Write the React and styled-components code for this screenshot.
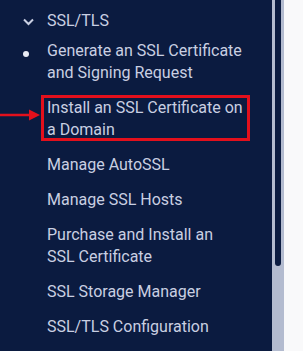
import React from "react";
import styled, { createGlobalStyle } from "styled-components";

const GlobalStyle = createGlobalStyle`
  html, body {
    margin: 0;
    padding: 0;
    background: #f9f9fa;
  }
`;

const Page = styled.div`
  display: flex;
  height: 351px;
  overflow: hidden;
  font-family: Roboto, "Liberation Sans", sans-serif;
`;

const Sidebar = styled.nav`
  width: 272px;
  background: #0b1b40;
  position: relative;
  padding-top: 10px;
  box-sizing: border-box;
`;

const Track = styled.div`
  width: 12px;
  background: #b3bbcf;
  display: flex;
  justify-content: center;
`;

const Thumb = styled.div`
  width: 6px;
  height: 266px;
  background: #0b1b40;
  border-radius: 0 0 3px 3px;
`;

const Content = styled.div`
  flex: 1;
  background: #f9f9fa;
`;

const Section = styled.div`
  display: flex;
  align-items: center;
  color: #c9cfe2;
  font-size: 16px;
  line-height: 22px;
  padding-left: 22px;
  gap: 12px;
`;

const List = styled.ul`
  list-style: none;
  margin: 0;
  padding: 2px 0 0 0;
`;

const Item = styled.li`
  position: relative;
  padding: 6px 20px 7px 47px;
  color: #c9cfe2;
  font-size: 16px;
  line-height: 22px;
  white-space: nowrap;

  ${(p) =>
    p.$active &&
    `
    &::before {
      content: "";
      position: absolute;
      left: 23px;
      top: 17px;
      width: 6px;
      height: 6px;
      border-radius: 50%;
      background: #e9ecf5;
    }
  `}
`;

const Line = styled.span`
  display: block;
`;

const Highlight = styled.span`
  position: absolute;
  left: 41px;
  top: 4px;
  width: 209px;
  height: 46px;
  border: 3px solid #e3101c;
  box-sizing: border-box;
  pointer-events: none;
`;

const Arrow = styled.svg`
  position: absolute;
  left: 0;
  top: 18px;
`;

const Chevron = () => (
  <svg width="13" height="13" viewBox="0 0 13 13">
    <path d="M2 4.5 L6.5 9 L11 4.5" fill="none" stroke="#c9cfe2" strokeWidth="2" />
  </svg>
);

const items = [
  { lines: ["Generate an SSL Certificate", "and Signing Request"], active: true },
  { lines: ["Install an SSL Certificate on", "a Domain"], marked: true },
  { lines: ["Manage AutoSSL"] },
  { lines: ["Manage SSL Hosts"] },
  { lines: ["Purchase and Install an", "SSL Certificate"] },
  { lines: ["SSL Storage Manager"] },
  { lines: ["SSL/TLS Configuration"] },
];

export default function App() {
  return (
    <>
      <GlobalStyle />
      <Page>
        <Sidebar>
          <Section>
            <Chevron />
            SSL/TLS
          </Section>
          <List>
            {items.map((it) => (
              <Item key={it.lines[0]} $active={it.active}>
                {it.lines.map((l) => (
                  <Line key={l}>{l}</Line>
                ))}
                {it.marked && (
                  <>
                    <Highlight />
                    <Arrow width="41" height="12" viewBox="0 0 41 12">
                      <line x1="0" y1="6" x2="32" y2="6" stroke="#e3101c" strokeWidth="2.5" />
                      <polygon points="29,0.5 40,6 29,11.5" fill="#e3101c" />
                    </Arrow>
                  </>
                )}
              </Item>
            ))}
          </List>
        </Sidebar>
        <Track>
          <Thumb />
        </Track>
        <Content />
      </Page>
    </>
  );
}
